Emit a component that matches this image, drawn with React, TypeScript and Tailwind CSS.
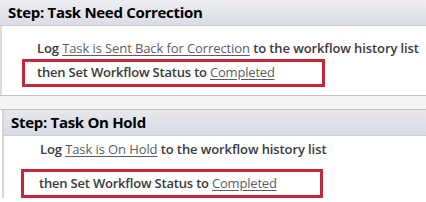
import React from "react";

const font = { fontFamily: '"Open Sans", "Noto Sans", sans-serif' };

function Link({ children }: { children: React.ReactNode }) {
  return <span className="underline text-[#5a5e64] font-normal underline-offset-2">{children}</span>;
}

export default function App() {
  return (
    <div className="w-[426px] h-[202px] overflow-hidden bg-white text-[#3a3a3a]" style={font}>
      {/* Panel 1 */}
      <div className="h-[26px] flex items-center pl-[8px] bg-gradient-to-b from-[#eceef2] to-[#dadde4] border-b border-[#c9ccd3]">
        <span className="text-[15px] font-bold text-black tracking-[-0.3px]">Step: Task Need Correction</span>
      </div>
      <div className="h-[69px] border-l-2 border-[#dcdcdc] flex flex-col">
        <div className="pl-[35px] pt-[12px] h-[33px] text-[13px] font-semibold leading-[20px] whitespace-nowrap tracking-[-0.1px]">
          Log <Link>Task is Sent Back for Correction</Link> to the workflow history list
        </div>
        <div className="ml-[20px] w-[303px] h-[28px] border-[3px] border-[#c4283a] flex items-center pl-[12px] text-[13px] font-semibold whitespace-nowrap tracking-[-0.2px]">
          then Set Workflow Status to&nbsp;<Link>Completed</Link>
        </div>
      </div>
      {/* Separator */}
      <div className="h-[15px] border-t border-b border-[#c4c4c4] bg-[#f4f4f4]" />
      {/* Panel 2 */}
      <div className="ml-[2px] border-l-2 border-[#d6d6d6]">
        <div className="h-[26px] flex items-center pl-[7px] bg-gradient-to-b from-[#e6e8ed] to-[#d8dbe2] border-b border-[#c9ccd3]">
          <span className="text-[15px] font-bold text-black tracking-[-0.3px]">Step: Task On Hold</span>
        </div>
        <div className="flex flex-col">
          <div className="pl-[36px] pt-[3px] h-[33px] text-[13px] font-semibold leading-[20px] whitespace-nowrap tracking-[-0.1px]">
            Log <Link>Task is On Hold</Link> to the workflow history list
          </div>
          <div className="ml-[17px] w-[302px] h-[29px] border-[3px] border-[#c4283a] flex items-center pl-[15px] text-[13px] font-semibold whitespace-nowrap tracking-[-0.2px]">
            then Set Workflow Status to&nbsp;<Link>Completed</Link>
          </div>
        </div>
      </div>
    </div>
  );
}
